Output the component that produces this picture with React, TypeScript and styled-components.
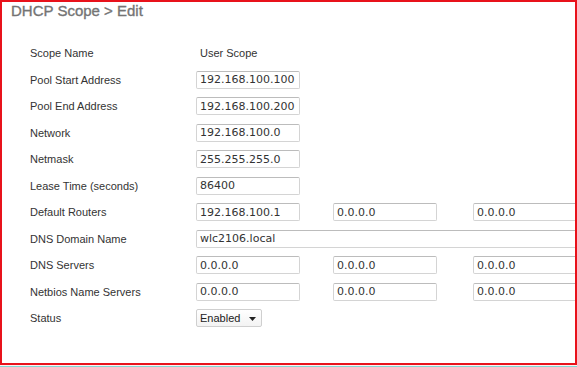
import React from 'react'
import styled, { createGlobalStyle } from 'styled-components'

const GlobalStyle = createGlobalStyle`
  html, body {
    margin: 0;
    padding: 0;
    background: #ffffff;
  }
  * {
    box-sizing: border-box;
  }
`

type Field = { label: string; values?: string[]; text?: string; wide?: string; select?: string }

const fields: Field[] = [
  { label: 'Scope Name', text: 'User Scope' },
  { label: 'Pool Start Address', values: ['192.168.100.100'] },
  { label: 'Pool End Address', values: ['192.168.100.200'] },
  { label: 'Network', values: ['192.168.100.0'] },
  { label: 'Netmask', values: ['255.255.255.0'] },
  { label: 'Lease Time (seconds)', values: ['86400'] },
  { label: 'Default Routers', values: ['192.168.100.1', '0.0.0.0', '0.0.0.0'] },
  { label: 'DNS Domain Name', wide: 'wlc2106.local' },
  { label: 'DNS Servers', values: ['0.0.0.0', '0.0.0.0', '0.0.0.0'] },
  { label: 'Netbios Name Servers', values: ['0.0.0.0', '0.0.0.0', '0.0.0.0'] },
  { label: 'Status', select: 'Enabled' },
]

const cellWidths = [137, 140, 140]

const App = () => (
  <>
    <GlobalStyle />
    <Shell>
      <Frame>
        <Title>DHCP Scope &gt; Edit</Title>
        <Form>
          {fields.map(f => (
            <Row key={f.label}>
              <Label>{f.label}</Label>
              {f.text && <Value>{f.text}</Value>}
              {f.values &&
                f.values.map((v, i) => (
                  <Cell key={i} $w={cellWidths[i]}>
                    <TextBox defaultValue={v} />
                  </Cell>
                ))}
              {f.wide && <TextBox $wide defaultValue={f.wide} />}
              {f.select && (
                <Select>
                  <span>{f.select}</span>
                  <svg width="7" height="4" viewBox="0 0 7 4">
                    <path d="M0 0 H7 L3.5 4 Z" fill="#222" />
                  </svg>
                </Select>
              )}
            </Row>
          ))}
        </Form>
      </Frame>
    </Shell>
  </>
)

const Shell = styled.div`
  width: 577px;
  height: 367px;
  border-bottom: 1px solid #7fd9d4;
  padding-bottom: 1px;
  background: #fdf2f2;
`
const Frame = styled.div`
  width: 577px;
  height: 365px;
  border: 2px solid #e8121b;
  background: #ffffff;
  overflow: hidden;
`
const Title = styled.div`
  font-family: 'Liberation Sans', Arial, sans-serif;
  font-size: 15px;
  line-height: 18px;
  color: #747474;
  -webkit-text-stroke: 0.35px #747474;
  padding-left: 9px;
`
const Form = styled.div`
  display: flex;
  flex-direction: column;
  margin-top: 20px;
  padding-left: 28px;
`
const Row = styled.div`
  display: flex;
  align-items: center;
  height: 26.5px;
  white-space: nowrap;
`
const Label = styled.div`
  width: 166px;
  flex: none;
  font-family: 'Liberation Sans', Tahoma, sans-serif;
  font-size: 11px;
  color: #333333;
`
const Value = styled.div`
  padding-left: 4px;
  font-family: 'Liberation Sans', Tahoma, sans-serif;
  font-size: 11px;
  color: #333333;
`
const Cell = styled.div<{ $w: number }>`
  width: ${({ $w }) => $w}px;
  flex: none;
`
const TextBox = styled.input<{ $wide?: boolean }>`
  display: block;
  width: ${({ $wide }) => ($wide ? '420px' : '104px')};
  flex: none;
  height: 18px;
  margin: 0;
  padding: 0 0 0 3px;
  border: 1px solid #d4d4d4;
  border-top-color: #bcbcbc;
  border-radius: 2px;
  font-family: 'DejaVu Sans', Verdana, sans-serif;
  font-size: 11px;
  color: #333333;
  background: #ffffff;
  outline: none;
`
const Select = styled.div`
  display: flex;
  align-items: center;
  justify-content: space-between;
  width: 66px;
  height: 18px;
  padding: 0 5px 0 3px;
  border: 1px solid #cfcfcf;
  border-radius: 2px;
  background: linear-gradient(#ffffff, #f3f3f3);
  font-family: 'Liberation Sans', Tahoma, sans-serif;
  font-size: 11px;
  color: #222222;
  svg {
    margin-top: 2px;
  }
`

export default App
